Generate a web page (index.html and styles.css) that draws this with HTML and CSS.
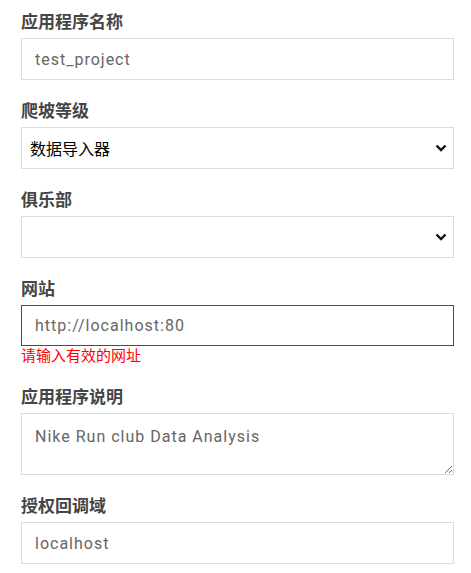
FILE: index.html
```html
<!DOCTYPE html>
<html lang="zh">
<head>
<meta charset="utf-8">
<link rel="stylesheet" href="styles.css">
</head>
<body>
<form class="form">
  <div class="group">
    <label class="label">应用程序名称</label>
    <input class="control" type="text" value="test_project">
  </div>
  <div class="group">
    <label class="label">爬坡等级</label>
    <div class="select-wrap">
      <select class="control select"><option>数据导入器</option></select>
      <svg class="chev" width="12" height="8" viewBox="0 0 12 8"><path d="M1.5 1.5 L6 6 L10.5 1.5" fill="none" stroke="#111" stroke-width="2.4"/></svg>
    </div>
  </div>
  <div class="group">
    <label class="label">俱乐部</label>
    <div class="select-wrap">
      <select class="control select"><option></option></select>
      <svg class="chev" width="12" height="8" viewBox="0 0 12 8"><path d="M1.5 1.5 L6 6 L10.5 1.5" fill="none" stroke="#111" stroke-width="2.4"/></svg>
    </div>
  </div>
  <div class="group group-error">
    <label class="label">网站</label>
    <input class="control invalid" type="text" value="http://localhost:80">
    <div class="error">请输入有效的网址</div>
  </div>
  <div class="group">
    <label class="label">应用程序说明</label>
    <textarea class="control textarea">Nike Run club Data Analysis</textarea>
  </div>
  <div class="group">
    <label class="label">授权回调域</label>
    <input class="control" type="text" value="localhost">
  </div>
</form>
</body>
</html>
```

FILE: styles.css
```css
html, body {
  margin: 0;
  padding: 0;
  background: #ffffff;
}
body {
  padding: 9px 17px 0 21px;
  font-family: Roboto, "Noto Sans CJK SC", sans-serif;
}
.form {
  display: flex;
  flex-direction: column;
  gap: 18px;
}
.group {
  display: flex;
  flex-direction: column;
}
.group-error {
  margin-bottom: 2px;
}
.label {
  font-family: "Noto Sans CJK SC", sans-serif;
  font-size: 17px;
  font-weight: 700;
  line-height: 24px;
  color: #454545;
  margin-bottom: 5px;
}
.control {
  box-sizing: border-box;
  width: 100%;
  height: 42px;
  margin: 0;
  border: 1px solid #dcdce3;
  border-radius: 0;
  background: #fff;
  padding: 0 13px;
  font-family: Roboto, "Noto Sans CJK SC", sans-serif;
  font-size: 16px;
  font-weight: 400;
  letter-spacing: 1px;
  color: #666;
  outline: none;
}
.control.invalid {
  height: 41px;
  border: 1px solid #ff0000;
}
.select-wrap {
  position: relative;
}
.control.select {
  appearance: none;
  -webkit-appearance: none;
  padding: 0 8px;
  color: #000;
  letter-spacing: 0;
  font-family: "Noto Sans CJK SC", sans-serif;
  font-size: 16px;
}
.chev {
  position: absolute;
  right: 7px;
  top: 17px;
  pointer-events: none;
}
.error {
  font-family: "Noto Sans CJK SC", sans-serif;
  font-size: 15px;
  line-height: 18px;
  color: #ff0000;
}
.control.textarea {
  height: 62px;
  padding: 12px 13px;
  line-height: 22px;
  resize: vertical;
  display: block;
}
```
